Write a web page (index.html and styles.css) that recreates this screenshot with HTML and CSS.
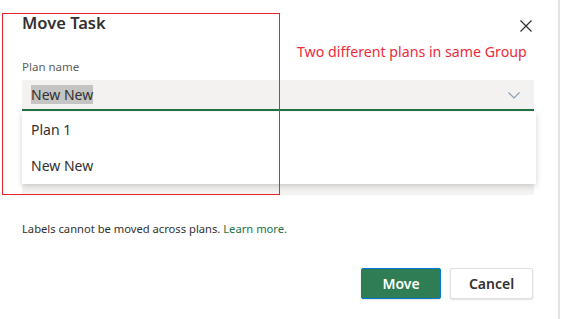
FILE: index.html
```html
<!DOCTYPE html>
<html lang="en">
<head>
<meta charset="UTF-8" />
<title>Move Task</title>
<link rel="stylesheet" href="styles.css">
</head>
<body>
  <div class="dialog">
    <div class="dialog-head">
      <h1>Move Task</h1>
      <button class="close" aria-label="Close">
        <svg width="12" height="12" viewBox="0 0 12 12"><path d="M0.5 0.5 L11.5 11.5 M11.5 0.5 L0.5 11.5" stroke="#323130" stroke-width="1.2" fill="none"/></svg>
      </button>
    </div>

    <label class="field-label">Plan name</label>
    <div class="select-wrap">
      <div class="select">
        <span class="selected">New New</span>
        <svg class="chevron" width="12" height="7" viewBox="0 0 12 7"><path d="M0.5 0.5 L6 6 L11.5 0.5" stroke="#8a9bb0" stroke-width="1.1" fill="none"/></svg>
      </div>
      <div class="under-field"></div>
      <ul class="options">
        <li>Plan 1</li>
        <li>New New</li>
      </ul>
    </div>

    <p class="note">Labels cannot be moved across plans. <a href="#">Learn more.</a></p>

    <div class="actions">
      <button class="btn btn-primary">Move</button>
      <button class="btn">Cancel</button>
    </div>

    <div class="annot-box"></div>
    <div class="annot-text">Two different plans in same Group</div>
  </div>
</body>
</html>
```

FILE: styles.css
```css
body {
  margin: 0;
  background: white;
  font-family: "Noto Sans", "Open Sans", sans-serif;
  color: #323130;
}
.dialog {
  position: relative;
  width: 536px;
  height: 319px;
  padding: 0 0 0 22px;
  border-right: 2px solid #e3e3e3;
  box-sizing: content-box;
}
.dialog-head {
  display: flex;
  justify-content: space-between;
  align-items: flex-start;
  padding-top: 11px;
  height: 45px;
}
h1 {
  margin: 0;
  font-size: 16.5px;
  font-weight: 600;
  line-height: 24px;
}
.close {
  margin: 9px 26px 0 0;
  padding: 0;
  border: none;
  background: none;
  width: 12px;
  height: 12px;
}
.field-label {
  display: block;
  font-size: 11.5px;
  color: #605e5c;
  line-height: 16px;
  margin-top: 3px;
}
.select-wrap {
  position: relative;
  width: 512px;
  margin-top: 5px;
}
.select {
  height: 29px;
  background: #f3f2f1;
  border-bottom: 2px solid #217346;
  border-radius: 2px 2px 0 0;
  display: flex;
  align-items: center;
  justify-content: space-between;
  padding: 0 14px 0 9px;
}
.selected {
  background: #c4c4c4;
  font-size: 14px;
  line-height: 19px;
  color: #323130;
}
.chevron {
  margin-top: 2px;
}
.under-field {
  margin-top: 1px;
  height: 83px;
  background: #f3f2f1;
  border-radius: 0 0 2px 2px;
}
.options {
  position: absolute;
  top: 32px;
  left: 0;
  width: 514px;
  margin: 0;
  padding: 0;
  list-style: none;
  background: white;
  box-shadow: 0 2px 6px rgba(0,0,0,0.18);
}
.options li {
  height: 36px;
  line-height: 36px;
  padding-left: 9px;
  font-size: 14px;
  color: #323130;
}
.note {
  margin: 26px 0 0;
  font-size: 11.2px;
  color: #323130;
}
.note a {
  color: #217346;
  text-decoration: none;
}
.actions {
  display: flex;
  justify-content: flex-end;
  gap: 9px;
  margin-top: 32px;
  width: 511px;
}
.btn {
  height: 31px;
  width: 83px;
  font-family: inherit;
  font-size: 14px;
  font-weight: 600;
  color: #323130;
  background: white;
  border: 1px solid #e1dfdd;
  border-radius: 2px;
  box-shadow: 0 1px 2px rgba(0,0,0,0.12);
}
.btn-primary {
  width: 80px;
  background: #2e7d55;
  color: white;
  border: 1px solid #0078d4;
}
.annot-box {
  position: absolute;
  left: 2px;
  top: 13px;
  width: 276px;
  height: 180px;
  border: 1px solid #e8262f;
}
.annot-text {
  position: absolute;
  left: 297px;
  top: 42px;
  font-size: 14.2px;
  color: #ee2a3b;
}
```
